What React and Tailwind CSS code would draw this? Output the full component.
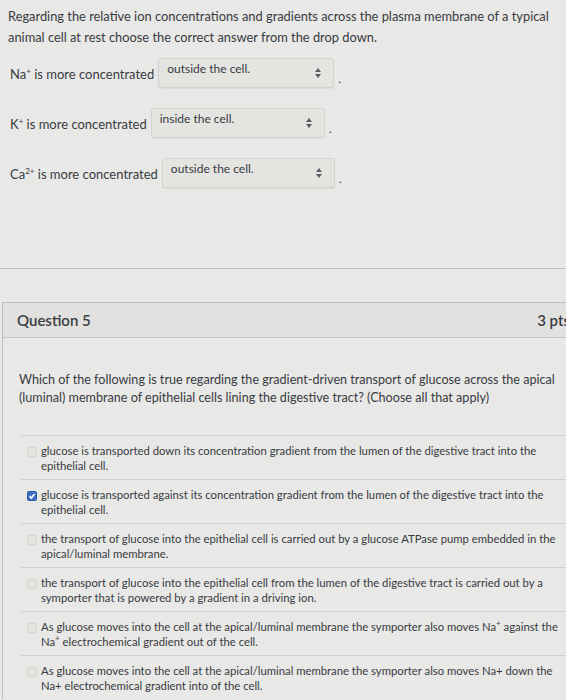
import React from 'react';

const Sup = ({ children }) => (
  <span className="relative -top-[5px] text-[8px] leading-none align-baseline">{children}</span>
);

const OPTIONS = [
  { checked: false, text: <>glucose is transported down its concentration gradient from the lumen of the digestive tract into the epithelial cell.</> },
  { checked: true, text: <>glucose is transported against its concentration gradient from the lumen of the digestive tract into the epithelial cell.</> },
  { checked: false, text: <>the transport of glucose into the epithelial cell is carried out by a glucose ATPase pump embedded in the apical/luminal membrane.</> },
  { checked: false, text: <>the transport of glucose into the epithelial cell from the lumen of the digestive tract is carried out by a symporter that is powered by a gradient in a driving ion.</> },
  { checked: false, text: <>As glucose moves into the cell at the apical/luminal membrane the symporter also moves Na<Sup>+</Sup> against the Na<Sup>+</Sup> electrochemical gradient out of the cell.</> },
  { checked: false, text: <>As glucose moves into the cell at the apical/luminal membrane the symporter also moves Na+ down the Na+ electrochemical gradient into of the cell.</> },
];

const Select = ({ value, width }) => (
  <div className={`flex items-center justify-between h-[30px] ${width} rounded-[3px] border border-[#d2d2cf] bg-[#e4e4e1] pl-2 pr-3 shadow-[0_1px_1px_rgba(0,0,0,0.06)]`}>
    <span className="text-[12px] -mt-2">{value}</span>
    <svg width="6" height="10" viewBox="0 0 6 10" className="fill-[#5a5d63]">
      <path d="M3 0 L6 4 H0 Z" />
      <path d="M0 6 H6 L3 10 Z" />
    </svg>
  </div>
);

const Row = ({ label, value, width }) => (
  <div className="flex items-center h-[50px]">
    <span className="text-[13px] mt-1">{label}</span>
    <div className="ml-1"><Select value={value} width={width} /></div>
    <span className="text-[12px] ml-1 mt-3">.</span>
  </div>
);

export default function App() {
  return (
    <div className="w-[566px] h-[700px] overflow-hidden bg-[#e8e8e6] text-[#383b42]" style={{ fontFamily: 'Lato, "Open Sans", sans-serif' }}>
      <div className="h-[268px] px-2 pt-[6px]">
        <p className="text-[12.85px] leading-[21px]">
          Regarding the relative ion concentrations and gradients across the plasma membrane of a typical animal cell at rest choose the correct answer from the drop down.
        </p>
        <div className="pt-0 pl-[2px] flex flex-col">
          <Row label={<>Na<Sup>+</Sup> is more concentrated</>} value="outside the cell." width="w-[176px]" />
          <Row label={<>K<Sup>+</Sup> is more concentrated</>} value="inside the cell." width="w-[174px]" />
          <Row label={<>Ca<Sup>2+</Sup> is more concentrated</>} value="outside the cell." width="w-[173px]" />
        </div>
      </div>
      <div className="border-t border-[#bdbdbb] h-[34px]" />
      <div className="ml-[2px] border-t border-l border-[#bdbdbb]">
        <div className="h-[35px] bg-[#e1e1df] border-b border-[#c4c4c2] flex items-center justify-between pl-[14px]">
          <span className="text-[15px] font-semibold text-[#3a3d44]">Question 5</span>
          <span className="text-[15px] font-semibold text-[#3a3d44] -mr-[4px]">3 pts</span>
        </div>
        <div className="pl-[16px] pt-[33px] pb-[28px] pr-2">
          <p className="text-[12.6px] leading-[18px]">
            Which of the following is true regarding the gradient-driven transport of glucose across the apical (luminal) membrane of epithelial cells lining the digestive tract? (Choose all that apply)
          </p>
        </div>
        <div className="pl-[18px]">
          {OPTIONS.map((o, i) => (
            <div key={i} className="border-t border-[#cfcfcc] h-[44px] flex pt-[7px] pl-[6px]">
              <div className={`mt-[4px] w-[10px] h-[10px] shrink-0 rounded-[2px] flex items-center justify-center ${o.checked ? 'bg-[#3d6fc2] border border-[#2f5aa0]' : 'bg-[#e2e2df] border border-[#d6d6d3]'}`}>
                {o.checked && (
                  <svg width="8" height="8" viewBox="0 0 8 8" fill="none" stroke="white" strokeWidth="1.6">
                    <path d="M1.5 4.2 L3.3 6 L6.6 2" />
                  </svg>
                )}
              </div>
              <p className="ml-[4px] text-[11.3px] leading-[15px] pr-[8px]">{o.text}</p>
            </div>
          ))}
        </div>
      </div>
    </div>
  );
}
